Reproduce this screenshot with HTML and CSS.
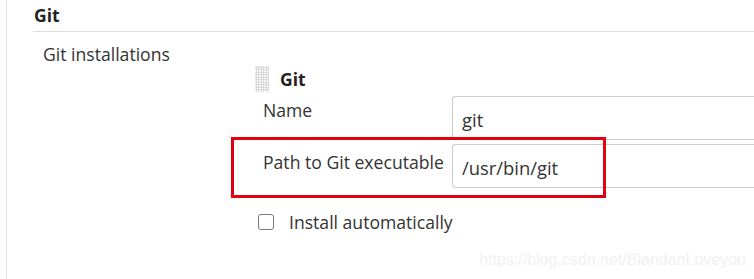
FILE: index.html
```html
<!DOCTYPE html>
<html lang="en">
  <head>
    <meta charset="UTF-8" />
    <title>Git installations</title>
    <link rel="stylesheet" href="styles.css">
  </head>
  <body>
    <div class="page">
      <!-- section header -->
      <div class="section">
        <h2 class="section-title">Git</h2>
        <div class="section-body">
          <div class="setting-name">Git installations</div>

          <!-- repeatable block -->
          <div class="repeated">
            <div class="repeated-head">
              <span class="handle"></span>
              <span class="repeated-title">Git</span>
            </div>
            <div class="field">
              <label class="field-label">Name</label>
              <input class="field-input" type="text" value="git" />
            </div>
            <div class="field field-marked">
              <label class="field-label">Path to Git executable</label>
              <input class="field-input" type="text" value="/usr/bin/git" />
              <span class="mark"></span>
            </div>
            <div class="check-row">
              <input type="checkbox" class="check" id="auto" />
              <label for="auto">Install automatically</label>
            </div>
          </div>
        </div>
      </div>
      <div class="watermark">https://blog.csdn.net/BiandanLoveyou</div>
    </div>
  </body>
</html>
```

FILE: styles.css
```css
/* base */
body {
  margin: 0;
  padding: 0;
  font-family: "Open Sans", "Noto Sans", sans-serif;
  color: #333;
  background: #fff;
  overflow: hidden;
}

.page {
  position: relative;
  height: 279px;
  margin-left: 6px;
  border-left: 1px solid #e4e4e4;
  overflow: hidden;
}

/* header */
.section {
  padding-left: 26px;
}

.section-title {
  margin: 0;
  padding: 3px 0 4px 1px;
  font-size: 17.5px;
  font-weight: 700;
  line-height: 24px;
  color: #222;
  border-bottom: 1px solid #ddd;
}

.setting-name {
  margin: 10px 0 0 10px;
  font-size: 17.6px;
  line-height: 24px;
}

/* repeated block */
.repeated {
  margin-left: 222px;
}

.repeated-head {
  display: flex;
  align-items: center;
  height: 26px;
}

.handle {
  width: 14px;
  height: 26px;
  margin-right: 11px;
  background-image: radial-gradient(circle, #c8c8c8 0.8px, transparent 1px);
  background-size: 2.5px 2.5px;
}

.repeated-title {
  font-size: 17.5px;
  font-weight: 700;
  color: #222;
}

.field {
  position: relative;
  display: flex;
  align-items: flex-start;
}

.field-label {
  flex: none;
  width: 197px;
  padding: 6px 0 0 8px;
  box-sizing: border-box;
  font-size: 17.6px;
  line-height: 24px;
  white-space: nowrap;
}

.field-marked .field-label {
  padding-top: 10px;
}

/* input runs off the right edge in the screenshot */
.field-input {
  flex: none;
  width: 302px;
  height: 44px;
  margin-top: 4px;
  padding: 3px 9px 0;
  box-sizing: border-box;
  border: 1px solid #ccc;
  border-right: none;
  border-radius: 4px 0 0 4px;
  font-family: inherit;
  font-size: 18.4px;
  color: #333;
}

/* red annotation box */
.mark {
  position: absolute;
  left: -24px;
  top: -3px;
  width: 375px;
  height: 61px;
  border: 3px solid #e00010;
  box-sizing: border-box;
  pointer-events: none;
}

.check-row {
  display: flex;
  align-items: center;
  margin-top: 22px;
  margin-left: 3px;
  font-size: 17.6px;
}

.check {
  width: 16px;
  height: 16px;
  margin: 0 15px 0 0;
  appearance: none;
  border: 1px solid #777;
  border-radius: 3px;
}

.watermark {
  position: absolute;
  right: 8px;
  bottom: 10px;
  font-family: "Liberation Sans", Arial, sans-serif;
  font-size: 16px;
  color: #f1f1f1;
}
```
